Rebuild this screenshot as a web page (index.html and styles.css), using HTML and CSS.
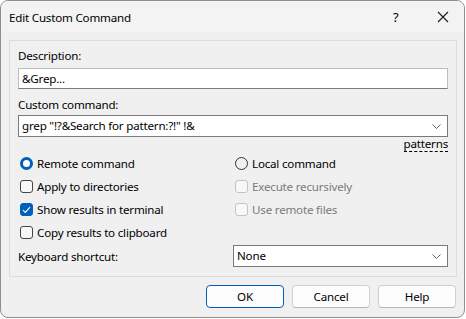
FILE: index.html
```html
<!DOCTYPE html>
<html lang="en">
<head>
<meta charset="UTF-8">
<title>Edit Custom Command</title>
<link rel="stylesheet" href="styles.css">
</head>
<body>
<div class="window">
	<div class="titlebar">
		<span class="title">Edit Custom Command</span>
		<span class="tb-help">?</span>
		<span class="tb-close">
			<svg width="12" height="12" viewBox="0 0 12 12"><path d="M1 1L11 11M11 1L1 11" stroke="#1a1a1a" stroke-width="1.1"/></svg>
		</span>
	</div>
	<div class="client">
		<div class="group">
			<div class="label">Description:</div>
			<div class="edit">&amp;Grep...</div>
			<div class="label second">Custom command:</div>
			<div class="combo">
				<span>grep "!?&amp;Search for pattern:?!" !&amp;</span>
				<svg class="arrow" width="9" height="5" viewBox="0 0 9 5"><path d="M0.5 0.5L4.5 4.5L8.5 0.5" fill="none" stroke="#606060" stroke-width="1"/></svg>
			</div>
			<div class="patterns"><span>patterns</span></div>
			<div class="options">
				<div class="col">
					<div class="opt"><i class="radio on"></i>Remote command</div>
					<div class="opt"><i class="check"></i>Apply to directories</div>
					<div class="opt"><i class="check on"><svg width="9" height="8" viewBox="0 0 9 8"><path d="M1 4.2L3.3 6.4L8 1.2" fill="none" stroke="#fff" stroke-width="1.1"/></svg></i>Show results in terminal</div>
					<div class="opt"><i class="check"></i>Copy results to clipboard</div>
				</div>
				<div class="col">
					<div class="opt"><i class="radio"></i>Local command</div>
					<div class="opt disabled"><i class="check"></i>Execute recursively</div>
					<div class="opt disabled"><i class="check"></i>Use remote files</div>
				</div>
			</div>
			<div class="shortcut">
				<div class="sc-label">Keyboard shortcut:</div>
				<div class="combo small">
					<span>None</span>
					<svg class="arrow" width="9" height="5" viewBox="0 0 9 5"><path d="M0.5 0.5L4.5 4.5L8.5 0.5" fill="none" stroke="#606060" stroke-width="1"/></svg>
				</div>
			</div>
		</div>
		<div class="buttons">
			<div class="btn default">OK</div>
			<div class="btn">Cancel</div>
			<div class="btn">Help</div>
		</div>
	</div>
</div>
</body>
</html>
```

FILE: styles.css
```css
body{
	margin:0;
	font-family:"Noto Sans","Open Sans",sans-serif;
	font-size:11.6px;
	letter-spacing:-0.2px;
	color:#000;
	background:#fff;
}
.window{
	width:463px;
	height:316px;
	border:1px solid #8f8f8f;
	border-radius:8px;
	background:#f0f0f0;
	overflow:hidden;
}
.titlebar{
	height:31px;
	background:#f3f3f3;
	display:flex;
	align-items:center;
}
.title{
	padding-left:8px;
	flex:1;
	padding-top:1px;
}
.tb-help{
	width:20px;
	font-size:13px;
	margin-right:24px;
}
.tb-close{
	display:flex;
	margin-right:15px;
}
.client{
	padding:8px 7px 0 8px;
}
.group{
	width:430px;
	border:1px solid #dcdcdc;
	padding:6px 8px 6px 8px;
	height:223px;
}
.label{
	height:16px;
	line-height:16px;
	margin-top:1px;
}
.label.second{
	margin-top:8px;
}
.edit{
	margin-top:4px;
	height:19px;
	line-height:19px;
	background:#fff;
	border:1px solid #bdbdbd;
	border-bottom-color:#7a7a7a;
	padding-left:3px;
}
.combo{
	margin-top:2px;
	height:20px;
	line-height:20px;
	background:#fff;
	border:1px solid #7a7a7a;
	padding-left:3px;
	display:flex;
	align-items:center;
}
.combo span{
	flex:1;
}
.combo .arrow{
	margin-right:6px;
}
.patterns{
	text-align:right;
	height:16px;
	line-height:14px;
}
.patterns span{
	border-bottom:1px dashed #000;
}
.options{
	display:flex;
	margin-top:-1px;
}
.col{
	width:215px;
}
.opt{
	height:23px;
	display:flex;
	align-items:center;
	padding-left:2px;
}
.opt.disabled{
	color:#7a7a7a;
}
.radio{
	display:inline-block;
	box-sizing:border-box;
	width:13px;
	height:13px;
	border:1px solid #333;
	border-radius:50%;
	margin-right:4px;
}
.radio.on{
	border:3.5px solid #005fb8;
	background:#fff;
}
.check{
	display:inline-flex;
	align-items:center;
	justify-content:center;
	box-sizing:border-box;
	width:13px;
	height:13px;
	border:1px solid #444;
	border-radius:3px;
	margin-right:4px;
	background:#f8f8f8;
}
.check.on{
	background:#005fb8;
	border-color:#005fb8;
}
.disabled .check{
	border-color:#c4c4c4;
}
.shortcut{
	display:flex;
	align-items:center;
	margin-top:1px;
}
.sc-label{
	width:215px;
}
.combo.small{
	flex:1;
	margin-top:0;
}
.buttons{
	display:flex;
	justify-content:flex-end;
	gap:8px;
	padding-top:8px;
	padding-right:1px;
}
.btn{
	width:76px;
	height:21px;
	line-height:21px;
	text-align:center;
	background:#fdfdfd;
	border:1px solid #d0d0d0;
	border-bottom-color:#b5b5b5;
	border-radius:4px;
}
.btn.default{
	border-color:#005fb8;
}
```
